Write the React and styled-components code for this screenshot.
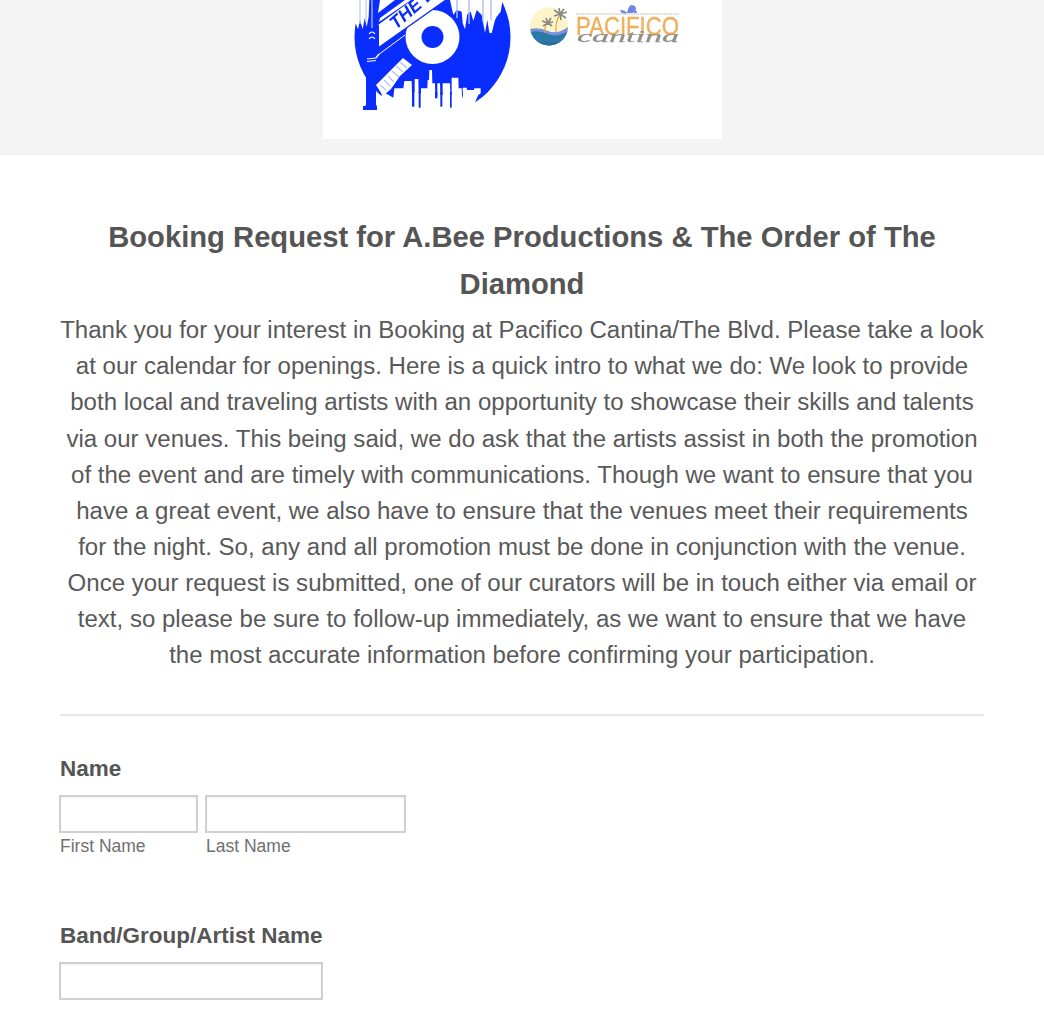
import React from "react";
import styled, { createGlobalStyle } from "styled-components";

const Global = createGlobalStyle`
  html, body { margin: 0; padding: 0; background: #fff; }
  body { font-family: "Liberation Sans", Arial, sans-serif; color: #555; overflow-x: hidden; }
`;
const Header = styled.header`
  height: 155px; background: #f4f4f4; display: flex; justify-content: center;
  box-shadow: inset 0 -7px 6px -5px #efefef;
`;
const LogoBox = styled.div`
  width: 399px; height: 139px; background: #fff;
  svg { display: block; filter: blur(0.35px); }
`;
const Form = styled.main`
  padding: 59px 60px 10px 60px;
`;
const Title = styled.h1`
  margin: 0 0 5.3px; font-size: 29.2px; line-height: 46.5px; font-weight: 700; text-align: center; color: #555;
`;
const Intro = styled.p`
  margin: 0 0 41px; font-size: 24.05px; line-height: 36.1px; text-align: center; color: #595959;
`;
const Rule = styled.hr`
  border: 0; height: 2px; background: #e7e7e7; margin: 0 0 39px;
`;
const Field = styled.section`
  margin-bottom: 63px;
  &:last-child { margin-bottom: 0; }
`;
const Label = styled.label`
  display: block; font-size: 22.5px; line-height: 28px; font-weight: 700; color: #555; margin-bottom: 12px;
`;
const Row = styled.div`
  display: flex; gap: 8px;
`;
const Col = styled.div`
  display: flex; flex-direction: column;
`;
const Input = styled.input`
  box-sizing: border-box; display: block; width: ${p => p.$w}px; height: 38px; margin-left: -1px;
  border: 2px solid #d0d0d0; background: #fff; padding: 0;
  box-shadow: inset 0 1px 2px #f0f0f0;
`;
const Sub = styled.span`
  font-size: 17.5px; line-height: 26px; color: #707070;
`;

const BLUE = "#0a2dff";
const pts = (list, ox, oy) => list.map(([x, y]) => `${ox + x / 3},${oy + y / 3}`).join(" ");

const bottomCity = [
  [95, 110], [112, 118], [130, 128], [133, 100], [160, 100], [163, 78], [185, 78], [186, 112], [194, 112], [194, 72], [205, 72], [206, 115],
  [213, 115], [213, 100], [232, 100], [233, 75], [237, 75], [238, 45], [246, 45], [247, 85], [255, 85], [256, 125], [262, 125], [262, 85],
  [270, 85], [271, 120], [278, 120], [278, 85], [300, 85], [301, 120], [305, 120], [305, 68], [325, 68], [326, 100], [335, 100], [336, 122],
  [338, 122], [338, 98], [350, 98], [351, 105], [372, 105], [373, 100], [392, 100], [392, 115], [385, 120], [378, 135], [372, 150], [372, 220], [95, 220],
];
const strips = [[186, 193, 155], [206, 212, 158], [271, 277, 155], [300, 305, 158], [255, 262, 130], [336, 338, 128]];
const topDrips = [
  [300, 0], [310, 45], [320, 30], [335, 35], [338, 70], [345, 88], [352, 42], [362, 35], [370, 62], [380, 30], [395, 45], [405, 98], [412, 60],
  [418, 98], [425, 100], [435, 60], [440, 50], [452, 35], [458, 0],
];
const topLeftDrips = [[0, 0], [0, 60], [18, 72], [24, 88], [30, 60], [38, 88], [44, 55], [50, 80], [56, 50], [58, 0]];

const Logo = () => (
  <svg width="399" height="139" viewBox="323 0 399 139">
    <circle cx="432.5" cy="37" r="78" fill={BLUE} />
    <polygon points={pts(topLeftDrips, 350, 0)} fill="#fff" />
    <polygon points={pts(topDrips, 350, 0)} fill="#fff" />
    <path d="M457 0v18M469 0v24M483 0v22M491 0v20" stroke="#aebcff" strokeWidth="1.4" />
    <path d="M360 0v24M366 0v22M372 0v30" stroke="#b9c5ff" strokeWidth="1.2" />
    <polygon points="380,0 395,0 378,13" fill="#fff" />
    <polygon points="405,0 380,18 379,22 411,0" fill="#fff" />
    <polygon points="378,25 412,0 446,0 378,48" fill="#fff" />
    <circle cx="432.5" cy="37" r="27" fill="#fff" />
    <circle cx="432.5" cy="37" r="11" fill={BLUE} />
    <path d="M378 48 L446 0" stroke={BLUE} strokeWidth="1.4" />
    <text x="396" y="30" transform="rotate(-41 396 30)" fontFamily="Liberation Sans, sans-serif" fontStyle="italic" fontWeight="700" fontSize="18" fill={BLUE}>THE B</text>
    <path d="M378 55 L405 35" stroke="#fff" strokeWidth="1" />
    <polygon points={pts(bottomCity, 350, 55)} fill="#fff" />
    {strips.map(([a, b, c]) => (
      <rect key={a} x={350 + a / 3} y={55 + 110 / 3} width={(b - a) / 3} height={(c - 110) / 3} fill={BLUE} />
    ))}
    <polygon points="403,58 412,65 400,76 391,89 383,96 376,85" fill="#fff" />
    <path d="M400 62l7 6M396 66l7 6M392 71l7 6M388 76l6 6M384 80l6 6M380 85l6 5" stroke="#aebcff" strokeWidth="1.1" />
    <path d="M367 28h10v31l-1 3v43l1 1v4h-14v-4h2l1-1V62l-1-3z" fill={BLUE} />
    <path d="M369 34q3-4 6 0M369 39q3-4 6 0M367 59l9-1M367 61.5l9-1" stroke="#fff" strokeWidth="1.2" fill="none" />
    <path d="M378 25v24" stroke={BLUE} strokeWidth="2" />
    <path d="M376 58l3-4" stroke="#fff" strokeWidth="1.4" />

    <clipPath id="sun"><circle cx="549" cy="26.5" r="19" /></clipPath>
    <g clipPath="url(#sun)">
      <rect x="530" y="7" width="38" height="40" fill="#fdf5c9" />
      <path d="M530 29q9-2 18 2t20-4v20h-38z" fill="#7b8fdc" />
      <path d="M530 32q9-2 18 2t20-3v16h-38z" fill="#2b79a9" />
      <path d="M530 42h38v5h-38z" fill="#2a6f99" />
    </g>
    <path d="M556 32q-1-10 4-18M545 33q-1-5 2-10" stroke="#d89b4d" strokeWidth="1.1" fill="none" />
    <path d="M560 14l-6-4M560 14l-6 2M560 14l-1-6M560 14l4-5M560 14l7-2M560 14l6 4M560 14l1 6M548 23l-6-2M548 23l-5 3M548 23l-2-5M548 23l3-5M548 23l5-1M548 23l4 3" stroke="#8c8a80" strokeWidth="1.7" />
    <path d="M576 14h103" stroke="#bcb8a8" strokeWidth="1" strokeDasharray="1.5 .7" />
    <path d="M620 10q5 0 7 3q-5 2-7-3zM627 13q1-6 4-8q5 0 5 4q-1 4-4 4zM634 13l2-3 1 3z" fill="#6f86e0" />
    <text x="576" y="35" fontFamily="Liberation Sans, sans-serif" fontSize="26" fill="#efb05c" stroke="#efb05c" strokeWidth="0.4" textLength="103" lengthAdjust="spacingAndGlyphs">PACIFICO</text>
    <text x="577" y="42" fontFamily="Liberation Serif, serif" fontStyle="italic" fontSize="17" fill="#8f8f8b" stroke="#8f8f8b" strokeWidth="0.25" textLength="102" lengthAdjust="spacingAndGlyphs">cantina</text>
  </svg>
);

export default function App() {
  return (
    <>
      <Global />
      <Header><LogoBox><Logo /></LogoBox></Header>
      <Form>
        <Title>Booking Request for A.Bee Productions &amp; The Order of The Diamond</Title>
        <Intro>Thank you for your interest in Booking at Pacifico Cantina/The Blvd. Please take a look at our calendar for openings. Here is a quick intro to what we do: We look to provide both local and traveling artists with an opportunity to showcase their skills and talents via our venues. This being said, we do ask that the artists assist in both the promotion of the event and are timely with communications. Though we want to ensure that you have a great event, we also have to ensure that the venues meet their requirements for the night. So, any and all promotion must be done in conjunction with the venue. Once your request is submitted, one of our curators will be in touch either via email or text, so please be sure to follow-up immediately, as we want to ensure that we have the most accurate information before confirming your participation.</Intro>
        <Rule />
        <Field>
          <Label>Name</Label>
          <Row>
            <Col><Input $w={139} /><Sub>First Name</Sub></Col>
            <Col><Input $w={201} /><Sub>Last Name</Sub></Col>
          </Row>
        </Field>
        <Field>
          <Label>Band/Group/Artist Name</Label>
          <Input $w={264} />
        </Field>
      </Form>
    </>
  );
}
